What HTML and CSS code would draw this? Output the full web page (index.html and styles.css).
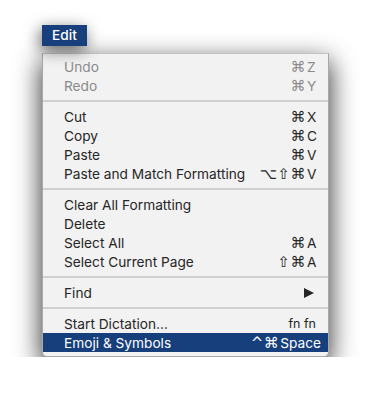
FILE: index.html
```html
<!DOCTYPE html>
<html lang="en">
<head>
    <meta charset="UTF-8">
    <title>Edit menu</title>
    <link rel="stylesheet" href="styles.css">
</head>
<body>
    <div class="menubar">
        <div class="title">Edit</div>
    </div>

    <div class="menu">
        <div class="item disabled"><span class="label">Undo</span><span class="keys"><span class="mods">⌘</span><span class="key">Z</span></span></div>
        <div class="item disabled"><span class="label">Redo</span><span class="keys"><span class="mods">⌘</span><span class="key">Y</span></span></div>
        <div class="sep"></div>
        <div class="item"><span class="label">Cut</span><span class="keys"><span class="mods">⌘</span><span class="key">X</span></span></div>
        <div class="item"><span class="label">Copy</span><span class="keys"><span class="mods">⌘</span><span class="key">C</span></span></div>
        <div class="item"><span class="label">Paste</span><span class="keys"><span class="mods">⌘</span><span class="key">V</span></span></div>
        <div class="item"><span class="label">Paste and Match Formatting</span><span class="keys"><span class="mods">⌥⇧⌘</span><span class="key">V</span></span></div>
        <div class="sep"></div>
        <div class="item"><span class="label">Clear All Formatting</span></div>
        <div class="item"><span class="label">Delete</span></div>
        <div class="item"><span class="label">Select All</span><span class="keys"><span class="mods">⌘</span><span class="key">A</span></span></div>
        <div class="item"><span class="label">Select Current Page</span><span class="keys"><span class="mods">⇧⌘</span><span class="key">A</span></span></div>
        <div class="sep"></div>
        <div class="item">
            <span class="label">Find</span>
            <svg class="arrow" width="10" height="10" viewBox="0 0 10 10"><polygon points="0,0 10,5 0,10" fill="#262626"/></svg>
        </div>
        <div class="sep"></div>
        <div class="item"><span class="label">Start Dictation…</span><span class="fn">fn fn</span></div>
        <div class="item selected"><span class="label">Emoji &amp; Symbols</span><span class="keys wide"><span class="mods">^⌘</span><span class="key">Space</span></span></div>
    </div>
</body>
</html>
```

FILE: styles.css
```css
body {
    margin: 0;
    background: #fff;
    font-family: Inter, 'Liberation Sans', sans-serif;
    font-size: 13.7px;
    color: #262626;
}
.menubar {
    padding: 25px 0 0 42px;
}
.title {
    display: inline-block;
    background-color: #163f7c;
    color: #fff;
    padding: 0 10px;
    height: 21px;
    line-height: 21px;
    font-weight: 500;
    box-shadow: -2px 4px 16px rgba(0,0,0,0.6);
}
.menu {
    margin: 7px 0 0 42px;
    width: 285px;
    background-color: #f2f2f2;
    border: 1px solid #a8a8a8;
    border-top-color: #c4c4c4;
    border-radius: 0 0 5px 5px;
    padding: 3px 0 4px;
    box-shadow: 0 9px 26px 1px rgba(0,0,0,0.8);
}
.item {
    display: flex;
    align-items: center;
    justify-content: space-between;
    height: 19px;
    padding: 0 11px 0 21px;
}
.disabled {
    color: #8a8a8a;
}
.selected {
    background-color: #163f7c;
    color: #fff;
}
.keys {
    display: flex;
    align-items: center;
}
.mods {
    font-family: 'DejaVu Sans', sans-serif;
    font-size: 15px;
    letter-spacing: 0.5px;
}
.key {
    min-width: 10px;
    margin-left: 1px;
}
.wide {
    margin-right: -4px;
}
.fn {
    font-size: 12.5px;
    margin-right: 1px;
}
.arrow {
    margin-right: 3px;
}
.sep {
    box-sizing: border-box;
    border-top: 2px solid #d0d0d0;
    margin-top: 5px;
    height: 7px;
}
```
